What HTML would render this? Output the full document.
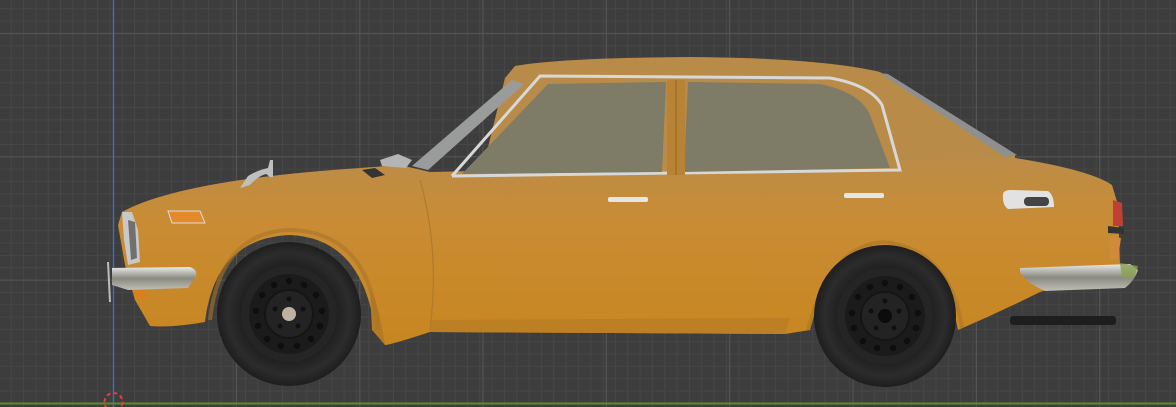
<!DOCTYPE html>
<html><head><meta charset="utf-8"><style>
html,body{margin:0;padding:0;background:#3d3d3d;overflow:hidden}
svg{display:block}
</style></head><body>
<svg width="1176" height="407" viewBox="0 0 1176 407" xmlns="http://www.w3.org/2000/svg">
<defs>
<pattern id="g" width="12.33" height="12.33" patternUnits="userSpaceOnUse" x="-1.6" y="8.3">
<path d="M0 0.5H12.33M0.5 0V12.33" stroke="#464646" stroke-width="1" fill="none"/>
</pattern>
<linearGradient id="body" x1="0" y1="0" x2="0" y2="1">
<stop offset="0" stop-color="#bc8c48"/><stop offset="0.35" stop-color="#c98c34"/><stop offset="1" stop-color="#c8861f"/>
</linearGradient>
<radialGradient id="tyre" cx="0.5" cy="0.5" r="0.5">
<stop offset="0.6" stop-color="#1c1c1c"/><stop offset="0.85" stop-color="#2c2c2c"/><stop offset="1" stop-color="#1e1e1e"/>
</radialGradient>
<linearGradient id="chrome" x1="0" y1="0" x2="0" y2="1">
<stop offset="0" stop-color="#e8e8e8"/><stop offset="0.5" stop-color="#8a8a80"/><stop offset="1" stop-color="#bfbfb5"/>
</linearGradient>
</defs>
<rect width="1176" height="407" fill="#3d3d3d"/>
<rect width="1176" height="407" fill="url(#g)"/>
<g stroke="#545454" stroke-width="1.2">
<line x1="0" y1="33.5" x2="1176" y2="33.5"/><line x1="0" y1="156.8" x2="1176" y2="156.8"/><line x1="0" y1="280.2" x2="1176" y2="280.2"/>
<line x1="236.5" y1="0" x2="236.5" y2="407"/><line x1="359.8" y1="0" x2="359.8" y2="407"/><line x1="483" y1="0" x2="483" y2="407"/><line x1="606.4" y1="0" x2="606.4" y2="407"/><line x1="729.7" y1="0" x2="729.7" y2="407"/><line x1="853" y1="0" x2="853" y2="407"/><line x1="976.4" y1="0" x2="976.4" y2="407"/><line x1="1099.7" y1="0" x2="1099.7" y2="407"/>
</g>
<line x1="113.5" y1="0" x2="113.5" y2="407" stroke="#3f6fb0" stroke-width="1.5"/>
<line x1="0" y1="403.5" x2="1176" y2="403.5" stroke="#5e8a2c" stroke-width="2"/>
<circle cx="113.5" cy="402" r="9" fill="none" stroke="#e04040" stroke-width="2" stroke-dasharray="4 3"/>

<!-- exhaust -->
<rect x="1010" y="316" width="106" height="9" rx="3" fill="#1e1e1e"/>

<!-- roof -->
<path d="M505 78 L515 66 Q560 58 690 57 Q820 58 880 72 L1015 155 L1015 170 L480 180 Z" fill="#b98b48"/>
<!-- body -->
<path d="M122 212 Q180 180 360 168 L400 165 L430 172 L1015 158 Q1090 170 1112 185 L1118 205 L1120 265 L1105 280 Q1060 285 1040 292 Q1000 312 958 330 Q945 262 885 246 Q830 250 810 330 L785 334 L430 332 Q390 345 385 345 L375 330 Q362 238 290 235 Q215 238 205 322 Q170 328 150 326 L135 300 L125 265 L118 225 Z" fill="url(#body)"/>
<path d="M385 345 Q378 300 370 290 L372 330 Z" fill="#b57a22"/>
<!-- sill shading -->
<path d="M430 320 L790 318 L785 334 L430 332 Z" fill="#bd7f24"/>
<path d="M420 180 Q440 250 430 330" stroke="#b07a2c" stroke-width="1.2" fill="none"/>
<!-- wheel arch shading -->
<path d="M210 320 Q220 232 290 230 Q370 232 378 330" stroke="#aa7428" stroke-width="4" fill="none" opacity="0.6"/>
<path d="M808 330 Q830 244 885 242 Q950 250 962 328" stroke="#aa7428" stroke-width="4" fill="none" opacity="0.6"/>

<!-- windshield trim -->
<path d="M412 166 L512 80 L524 84 L428 170 Z" fill="#9a9c9c"/>
<path d="M880 73 L888 74 L1017 155 L1005 157 Z" fill="#8e9090"/>
<!-- window chrome frame -->
<path d="M452 176 L540 76 L830 78 Q870 85 882 105 L900 170 L452 176" fill="none" stroke="#d8d8d8" stroke-width="3"/>
<!-- glass -->
<path d="M462 174 L548 84 L666 82 L662 172 Z" fill="#7e7b66"/>
<path d="M688 82 L820 84 Q860 92 870 115 L890 168 L684 172 Z" fill="#7e7b66"/>
<rect x="667" y="80" width="18" height="95" fill="#b98336"/>
<line x1="676" y1="80" x2="676" y2="175" stroke="#8f6426" stroke-width="1"/>
<!-- door handles -->
<rect x="608" y="197" width="40" height="5" rx="2" fill="#e6e6e6"/>
<rect x="844" y="193" width="40" height="5" rx="2" fill="#e6e6e6"/>
<path d="M1003 194 Q1004 190 1010 190 L1048 191 Q1054 195 1054 207 L1008 209 Q1002 205 1003 194Z" fill="#e2e2e2"/>
<rect x="1024" y="197" width="25" height="9" rx="4" fill="#444"/>
<!-- side marker -->
<path d="M168 211 L200 211 L205 223 L172 223 Z" fill="#e58a2a" stroke="#ddd" stroke-width="1"/>
<!-- mirror -->
<path d="M240 188 L248 176 Q258 170 268 168 L270 160 L273 160 L273 177 L270 177 L266 174 Q258 176 250 185 Z" fill="#bfbfbf"/>
<path d="M362 170 L375 168 L385 175 L372 178 Z" fill="#333"/>
<path d="M380 160 L398 154 L412 160 L406 168 L382 166 Z" fill="#b4b4b4"/>
<!-- front lights/grille -->
<path d="M122 212 L132 212 L138 230 L140 262 L128 265 L124 240 Z" fill="#c8c8c8"/>
<path d="M128 220 L135 222 L137 258 L131 260 Z" fill="#707070"/>
<path d="M108 262 L110 302" stroke="#bbb" stroke-width="2"/>
<!-- front bumper -->
<path d="M112 268 L190 267 Q198 270 196 276 L188 288 L128 290 L112 285 Z" fill="url(#chrome)"/>
<path d="M134 290 L146 290 L146 300 L138 300 Z" fill="#d97f1e"/>
<!-- rear light -->
<path d="M1113 200 L1122 203 L1123 226 L1113 226 Z" fill="#c04038"/>
<path d="M1108 226 L1124 228 L1124 234 L1108 233 Z" fill="#333"/>
<path d="M1110 236 L1121 238 L1118 258 L1110 260 Z" fill="#d08a3a"/>
<!-- rear bumper -->
<path d="M1020 268 L1130 264 L1138 270 Q1135 280 1125 288 L1045 291 Q1025 282 1020 272 Z" fill="url(#chrome)"/>
<path d="M1120 263 L1138 266 L1134 278 L1122 278 Z" fill="#8aa050" opacity="0.8"/>

<!-- front wheel -->
<g transform="translate(289,314)">
<circle r="72" fill="url(#tyre)"/>
<circle r="48" fill="#252525"/>
<circle r="40" fill="#1b1b1b"/>
<circle r="24" fill="#232323" stroke="#151515" stroke-width="2"/>
<circle r="7" fill="#bdb3a0"/>
<g fill="#101010">
<circle cx="0" cy="-15" r="2.5"/><circle cx="14" cy="-5" r="2.5"/><circle cx="9" cy="12" r="2.5"/><circle cx="-9" cy="12" r="2.5"/><circle cx="-14" cy="-5" r="2.5"/>
</g>
<g fill="#0e0e0e">
<circle cx="0" cy="-33" r="3.2"/><circle cx="15" cy="-29" r="3.2"/><circle cx="27" cy="-19" r="3.2"/><circle cx="33" cy="-3" r="3.2"/><circle cx="31" cy="12" r="3.2"/><circle cx="22" cy="25" r="3.2"/><circle cx="8" cy="32" r="3.2"/><circle cx="-8" cy="32" r="3.2"/><circle cx="-22" cy="25" r="3.2"/><circle cx="-31" cy="12" r="3.2"/><circle cx="-33" cy="-3" r="3.2"/><circle cx="-27" cy="-19" r="3.2"/><circle cx="-15" cy="-29" r="3.2"/>
</g>
</g>
<!-- rear wheel -->
<g transform="translate(885,316)">
<circle r="71" fill="url(#tyre)"/>
<circle r="48" fill="#252525"/>
<circle r="40" fill="#1b1b1b"/>
<circle r="24" fill="#232323" stroke="#151515" stroke-width="2"/>
<circle r="7" fill="#0c0c0c"/>
<g fill="#101010">
<circle cx="0" cy="-15" r="2.5"/><circle cx="14" cy="-5" r="2.5"/><circle cx="9" cy="12" r="2.5"/><circle cx="-9" cy="12" r="2.5"/><circle cx="-14" cy="-5" r="2.5"/>
</g>
<g fill="#0e0e0e">
<circle cx="0" cy="-33" r="3.2"/><circle cx="15" cy="-29" r="3.2"/><circle cx="27" cy="-19" r="3.2"/><circle cx="33" cy="-3" r="3.2"/><circle cx="31" cy="12" r="3.2"/><circle cx="22" cy="25" r="3.2"/><circle cx="8" cy="32" r="3.2"/><circle cx="-8" cy="32" r="3.2"/><circle cx="-22" cy="25" r="3.2"/><circle cx="-31" cy="12" r="3.2"/><circle cx="-33" cy="-3" r="3.2"/><circle cx="-27" cy="-19" r="3.2"/><circle cx="-15" cy="-29" r="3.2"/>
</g>
</g>
</svg>
</body></html>
